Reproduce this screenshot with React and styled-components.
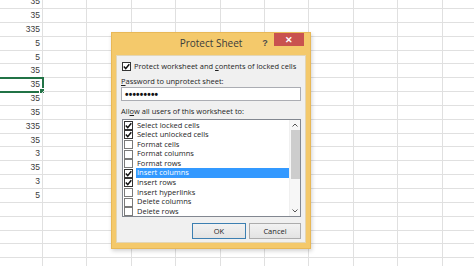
import React from 'react';
import styled, { createGlobalStyle } from 'styled-components';

const GlobalStyle = createGlobalStyle`
  html, body {
    margin: 0;
    padding: 0;
    background: #ffffff;
    overflow: hidden;
  }
  * { box-sizing: border-box; }
`;

const ROW_H = 13.85;
const COL_W = 44.4;

const Page = styled.div`
  position: relative;
  width: 474px;
  height: 266px;
  overflow: hidden;
  background: #ffffff;
`;

const Sheet = styled.div`
  display: flex;
  flex-direction: column;
  margin: -4.85px 0 0 -20px;
`;

const Row = styled.div`
  display: flex;
  height: ${ROW_H}px;
  flex: none;
`;

const Cell = styled.div`
  position: relative;
  flex: none;
  width: ${p => (p.$first ? 63 : COL_W)}px;
  height: 100%;
  border-right: 1px solid #e0e0e0;
  border-bottom: 1px solid #e0e0e0;
  font-family: "Liberation Sans", Arial, sans-serif;
  font-size: 8.5px;
  color: #3a3a3a;
  text-align: right;
  padding-right: 2px;
  line-height: ${ROW_H - 1}px;
  ${p => p.$selected && `
    outline: 2px solid #217346;
    outline-offset: -1px;
    &::after {
      content: '';
      position: absolute;
      right: -3px;
      bottom: -3px;
      width: 4px;
      height: 4px;
      background: #217346;
      border: 1px solid #ffffff;
    }
  `}
`;

const Dialog = styled.div`
  position: absolute;
  left: 111px;
  top: 32px;
  width: 200px;
  height: 217px;
  background: #f4c96b;
  border: 1px solid #e8b857;
  box-shadow: 1px 2px 4px rgba(0, 0, 0, 0.18);
  display: flex;
  flex-direction: column;
  font-family: "Open Sans", "Noto Sans", sans-serif;
`;

const TitleBar = styled.div`
  height: 22px;
  flex: none;
  display: flex;
  align-items: flex-start;
  position: relative;
`;

const Title = styled.div`
  position: absolute;
  left: 0;
  right: 0;
  top: 3px;
  text-align: center;
  font-size: 10px;
  color: #3b3b3b;
`;

const TitleControls = styled.div`
  margin-left: auto;
  display: flex;
  align-items: flex-start;
  gap: 4px;
  padding-right: 6px;
`;

const HelpGlyph = styled.span`
  font-family: "Liberation Sans", Arial, sans-serif;
  font-weight: bold;
  font-size: 9px;
  color: #4a4a4a;
  margin-top: 5px;
  width: 10px;
  text-align: center;
`;

const CloseButton = styled.div`
  width: 30px;
  height: 13px;
  background: #c9524f;
  color: #ffffff;
  display: flex;
  align-items: center;
  justify-content: center;
  font-family: "Liberation Sans", Arial, sans-serif;
  font-weight: bold;
  font-size: 9px;
`;

const Body = styled.div`
  flex: 1;
  margin: 0 4px 5px;
  background: #f0f0f0;
  border: 1px solid #e3d6b6;
  padding: 5px 4px 0 4px;
  display: flex;
  flex-direction: column;
  font-size: 7.5px;
  color: #1e1e1e;
`;

const CheckRow = styled.div`
  display: flex;
  align-items: center;
  gap: 3px;
  height: ${p => p.$h || 10}px;
  padding-left: ${p => p.$indent || 0}px;
  white-space: nowrap;
  ${p => p.$active && `
    & > span { background: #3399ff; color: #ffffff; }
  `}
`;

const Box = styled.div`
  flex: none;
  width: 9px;
  height: 9px;
  border: 1px solid ${p => (p.$dark ? '#333333' : '#7a7a7a')};
  background: #ffffff;
  display: flex;
  align-items: center;
  justify-content: center;
`;

const Label = styled.div`
  margin-top: ${p => p.$top || 0}px;
  height: 10px;
  line-height: 10px;
  white-space: nowrap;
`;

const PasswordInput = styled.div`
  margin-top: 1px;
  height: 14px;
  border: 1px solid #abadb3;
  background: #ffffff;
  display: flex;
  align-items: center;
  padding-left: 3px;
  font-family: "Liberation Sans", Arial, sans-serif;
  font-size: 10px;
  font-weight: bold;
  letter-spacing: 0.2px;
  color: #111;
`;

const ListBox = styled.div`
  margin: 3px 0 0 1px;
  height: 98px;
  border: 1px solid #828790;
  background: #ffffff;
  display: flex;
`;

const ListItems = styled.div`
  flex: 1;
  display: flex;
  flex-direction: column;
  padding-top: 0.5px;
`;

const ItemText = styled.span`
  flex: 1;
  height: 100%;
  line-height: 9.6px;
  padding-left: 1px;
`;

const ScrollBar = styled.div`
  flex: none;
  width: 11px;
  display: flex;
  flex-direction: column;
  align-items: center;
  background: #f7f7f7;
  border-left: 1px solid #f0f0f0;
`;

const Arrow = styled.div`
  height: 10px;
  display: flex;
  align-items: center;
  justify-content: center;
`;

const Thumb = styled.div`
  width: 9px;
  height: 49px;
  background: #cdcdcd;
`;

const Spacer = styled.div`
  flex: 1;
`;

const Buttons = styled.div`
  display: flex;
  justify-content: flex-end;
  gap: 3px;
  margin-top: 6px;
`;

const Button = styled.div`
  width: ${p => p.$w}px;
  height: 16px;
  border: 1px solid ${p => (p.$default ? '#3c7fb1' : '#acacac')};
  background: linear-gradient(#f2f2f2, #e3e3e3);
  display: flex;
  align-items: center;
  justify-content: center;
  font-size: 7.5px;
  color: #1e1e1e;
`;

const Check = () => (
  <svg width="7" height="7" viewBox="0 0 7 7">
    <path d="M0.8 3.6 L2.7 5.6 L6.3 1.2" fill="none" stroke="#111" strokeWidth="1.5" />
  </svg>
);

const Chevron = ({ up }) => (
  <svg width="6" height="4" viewBox="0 0 6 4">
    <path d={up ? 'M0.5 3.5 L3 1 L5.5 3.5' : 'M0.5 0.5 L3 3 L5.5 0.5'} fill="none" stroke="#555" strokeWidth="1" />
  </svg>
);

const values = ['35', '35', '335', '5', '5', '35', '35', '35', '35', '335', '35', '3', '35', '3', '5'];
const ROWS = 20;
const COLS = 11;

const permissions = [
  { label: 'Select locked cells', checked: true },
  { label: 'Select unlocked cells', checked: true },
  { label: 'Format cells', checked: false },
  { label: 'Format columns', checked: false },
  { label: 'Format rows', checked: false },
  { label: 'Insert columns', checked: true, active: true },
  { label: 'Insert rows', checked: true },
  { label: 'Insert hyperlinks', checked: false },
  { label: 'Delete columns', checked: false },
  { label: 'Delete rows', checked: false },
];

const App = () => {
  return (
    <Page>
      <GlobalStyle />
      <Sheet>
        {Array.from({ length: ROWS }).map((_, r) => (
          <Row key={r}>
            {Array.from({ length: COLS }).map((_, c) => (
              <Cell key={c} $first={c === 0} $selected={c === 0 && r === 6}>
                {c === 0 ? values[r] || '' : ''}
              </Cell>
            ))}
          </Row>
        ))}
      </Sheet>

      <Dialog>
        <TitleBar>
          <Title>Protect Sheet</Title>
          <TitleControls>
            <HelpGlyph>?</HelpGlyph>
            <CloseButton>✕</CloseButton>
          </TitleControls>
        </TitleBar>
        <Body>
          <CheckRow $indent={1}>
            <Box $dark><Check /></Box>
            <span>Protect worksheet and <u>c</u>ontents of locked cells</span>
          </CheckRow>
          <Label $top={5}><u>P</u>assword to unprotect sheet:</Label>
          <PasswordInput>•••••••••</PasswordInput>
          <Label $top={5}>All<u>o</u>w all users of this worksheet to:</Label>
          <ListBox>
            <ListItems>
              {permissions.map(p => (
                <CheckRow key={p.label} $h={9.6} $indent={1} $active={p.active}>
                  <Box $dark={p.checked}>{p.checked && <Check />}</Box>
                  <ItemText>{p.label}</ItemText>
                </CheckRow>
              ))}
            </ListItems>
            <ScrollBar>
              <Arrow><Chevron up /></Arrow>
              <Thumb />
              <Spacer />
              <Arrow><Chevron /></Arrow>
            </ScrollBar>
          </ListBox>
          <Buttons>
            <Button $w={54} $default>OK</Button>
            <Button $w={52}>Cancel</Button>
          </Buttons>
        </Body>
      </Dialog>
    </Page>
  );
};

export default App;
